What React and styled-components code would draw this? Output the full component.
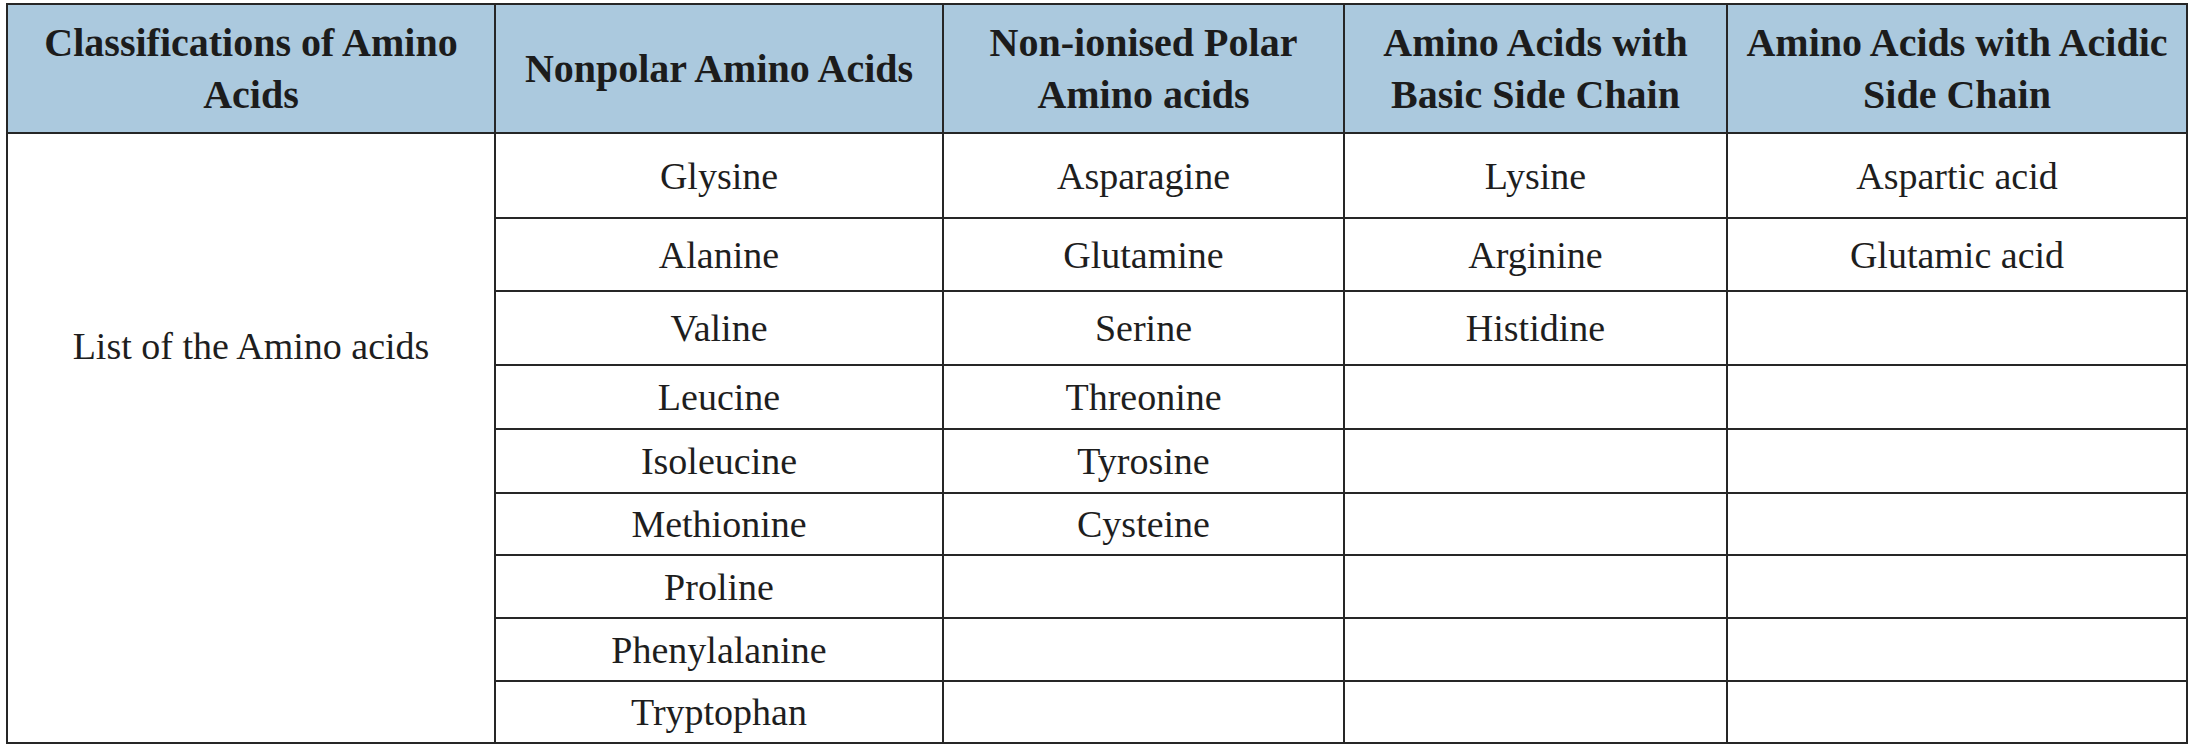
import React from "react";
import styled, { createGlobalStyle } from "styled-components";

const GlobalStyle = createGlobalStyle`
    html, body {
        margin: 0;
        padding: 0;
        background: #ffffff;
    }
    body {
        font-family: "Liberation Serif", "Times New Roman", serif;
        color: #1e1e1e;
    }
`;

const headers = [
    ["Classifications of Amino", "Acids"],
    ["Nonpolar Amino Acids"],
    ["Non-ionised Polar", "Amino acids"],
    ["Amino Acids with", "Basic Side Chain"],
    ["Amino Acids with Acidic", "Side Chain"],
];

const colWidths = [488, 448, 401, 383, 460];

const columns = [
    ["Glysine", "Alanine", "Valine", "Leucine", "Isoleucine", "Methionine", "Proline", "Phenylalanine", "Tryptophan"],
    ["Asparagine", "Glutamine", "Serine", "Threonine", "Tyrosine", "Cysteine"],
    ["Lysine", "Arginine", "Histidine"],
    ["Aspartic acid", "Glutamic acid"],
];

const rowHeights = [85, 73, 74, 64, 64, 62, 63, 63, 62];

const App = () => {
    return (
        <Page>
            <GlobalStyle />
            <Table>
                <colgroup>
                    {colWidths.map((w, i) => (
                        <col key={i} style={{ width: w }} />
                    ))}
                </colgroup>
                <thead>
                    <HeadRow>
                        {headers.map((lines, i) => (
                            <HeadCell key={i}>
                                {lines.map((line, j) => (
                                    <HeadLine key={j}>{line}</HeadLine>
                                ))}
                            </HeadCell>
                        ))}
                    </HeadRow>
                </thead>
                <tbody>
                    {rowHeights.map((h, r) => (
                        <Row key={r} $h={h}>
                            {r === 0 && (
                                <GroupCell rowSpan={rowHeights.length}>
                                    List of the Amino acids
                                </GroupCell>
                            )}
                            {columns.map((col, c) => (
                                <Cell key={c}>{col[r] || ""}</Cell>
                            ))}
                        </Row>
                    ))}
                </tbody>
            </Table>
        </Page>
    );
};

const Page = styled.div`
    padding: 3px 0 0 6px;
`;

const Table = styled.table`
    width: 2181px;
    table-layout: fixed;
    border-collapse: collapse;
    border: 2px solid #262626;
`;

const HeadRow = styled.tr`
    height: 129px;
    background-color: #abc9de;
`;

const HeadCell = styled.th`
    border: 2px solid #262626;
    padding: 0 6px;
    vertical-align: middle;
    text-align: center;
    font-weight: 700;
    font-size: 40px;
    line-height: 52px;
    color: #1c1c1c;
`;

const HeadLine = styled.div`
    white-space: nowrap;
`;

const Row = styled.tr`
    height: ${props => props.$h}px;
`;

const Cell = styled.td`
    border: 2px solid #262626;
    padding: 0 8px;
    text-align: center;
    vertical-align: middle;
    font-size: 38px;
    line-height: 42px;
    color: #1e1e1e;
    white-space: nowrap;
`;

const GroupCell = styled(Cell)`
    vertical-align: top;
    padding-top: 191px;
`;

export default App;
